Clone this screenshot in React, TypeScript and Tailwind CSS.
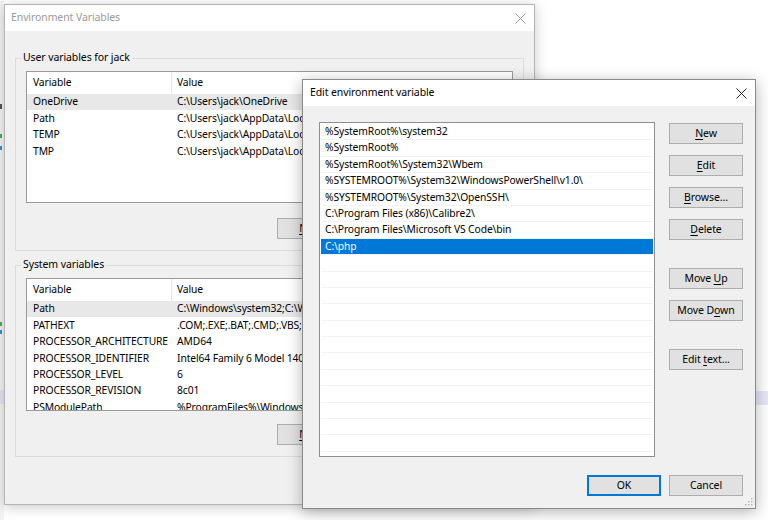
import React from "react";

const FONT = "font-['Noto_Sans','Open_Sans',sans-serif] tracking-[-0.1px]";

interface Row {
  name: string;
  value: string;
}

const userVars: Row[] = [
  { name: "OneDrive", value: "C:\\Users\\jack\\OneDrive" },
  { name: "Path", value: "C:\\Users\\jack\\AppData\\Local\\Microsoft\\WindowsApps;" },
  { name: "TEMP", value: "C:\\Users\\jack\\AppData\\Local\\Temp" },
  { name: "TMP", value: "C:\\Users\\jack\\AppData\\Local\\Temp" },
];

const systemVars: Row[] = [
  { name: "Path", value: "C:\\Windows\\system32;C:\\Windows;C:\\Windows\\System32\\Wbem;" },
  { name: "PATHEXT", value: ".COM;.EXE;.BAT;.CMD;.VBS;.VBE;.JS;.JSE;.WSF;.WSH;.MSC" },
  { name: "PROCESSOR_ARCHITECTURE", value: "AMD64" },
  { name: "PROCESSOR_IDENTIFIER", value: "Intel64 Family 6 Model 140 Stepping 1, GenuineIntel" },
  { name: "PROCESSOR_LEVEL", value: "6" },
  { name: "PROCESSOR_REVISION", value: "8c01" },
  { name: "PSModulePath", value: "%ProgramFiles%\\WindowsPowerShell\\Modules;" },
];

const paths = [
  "%SystemRoot%\\system32",
  "%SystemRoot%",
  "%SystemRoot%\\System32\\Wbem",
  "%SYSTEMROOT%\\System32\\WindowsPowerShell\\v1.0\\",
  "%SYSTEMROOT%\\System32\\OpenSSH\\",
  "C:\\Program Files (x86)\\Calibre2\\",
  "C:\\Program Files\\Microsoft VS Code\\bin",
  "C:\\php",
];

function CloseX({ color }: { color: string }) {
  return (
    <svg width="11" height="11" viewBox="0 0 11 11">
      <path d="M0.5 0.5 L10.5 10.5 M10.5 0.5 L0.5 10.5" stroke={color} strokeWidth="1" />
    </svg>
  );
}

// label with an underlined access key
function Key({ before = "", k, after = "" }: { before?: string; k: string; after?: string }) {
  return (
    <span>
      {before}
      <span className="underline underline-offset-2">{k}</span>
      {after}
    </span>
  );
}

function WinButton({
  children,
  primary = false,
}: {
  children: React.ReactNode;
  primary?: boolean;
}) {
  return (
    <div
      className={`flex h-[21px] w-[74px] shrink-0 items-center justify-center bg-[#e1e1e1] text-[10.5px] text-black ${
        primary ? "border-2 border-[#0078d7]" : "border border-[#adadad]"
      }`}
    >
      {children}
    </div>
  );
}

function VarList({ rows, height }: { rows: Row[]; height: string }) {
  return (
    <div className={`${height} overflow-hidden border border-[#9a9a9a] bg-white`}>
      <div className="flex h-[22px] items-center text-[10.3px] text-black">
        <div className="flex h-full w-[145px] items-center border-r border-[#e5e5e5] pl-[6px]">
          Variable
        </div>
        <div className="pl-[5px]">Value</div>
      </div>
      {rows.map((r, i) => (
        <div
          key={r.name}
          className={`flex h-[16.4px] items-center whitespace-nowrap text-[10.3px] text-black ${
            i === 0 ? "bg-[#e8e8e8]" : ""
          }`}
        >
          <div className="w-[145px] shrink-0 overflow-hidden pl-[6px]">{r.name}</div>
          <div className="pl-[5px]">{r.value}</div>
        </div>
      ))}
    </div>
  );
}

function GroupBox({
  label,
  children,
}: {
  label: string;
  children: React.ReactNode;
}) {
  return (
    <div className="relative border border-[#dcdcdc] px-[10px] pt-[12px] pb-[11px]">
      <span className="absolute -top-[9px] left-[5px] bg-[#f0f0f0] px-[2px] text-[10.5px] text-black">
        {label}
      </span>
      {children}
    </div>
  );
}

function EnvironmentDialog() {
  return (
    <div className="absolute left-[4px] top-[4px] flex h-[501px] w-[531px] flex-col border border-[#b4b4b4] bg-[#f0f0f0] shadow-[0_2px_12px_rgba(0,0,0,0.22)]">
      <div className="flex h-[26px] shrink-0 items-center justify-between bg-white pl-[6px] pr-[8px]">
        <span className="text-[10.5px] text-[#9a9a9a]">Environment Variables</span>
        <CloseX color="#a0a0a0" />
      </div>
      <div className="flex flex-col gap-[14px] px-[10px] pt-[27px]">
        <GroupBox label="User variables for jack">
          <VarList rows={userVars} height="h-[132px]" />
          <div className="mt-[15px] flex justify-end gap-[7px]">
            <WinButton>
              <Key k="N" after="ew..." />
            </WinButton>
            <WinButton>
              <Key k="E" after="dit..." />
            </WinButton>
            <WinButton>
              <Key k="D" after="elete" />
            </WinButton>
          </div>
        </GroupBox>
        <GroupBox label="System variables">
          <VarList rows={systemVars} height="h-[133px]" />
          <div className="mt-[13px] flex justify-end gap-[7px]">
            <WinButton>
              <Key k="N" after="ew..." />
            </WinButton>
            <WinButton>
              <Key before="E" k="d" after="it..." />
            </WinButton>
            <WinButton>
              <Key before="De" k="l" after="ete" />
            </WinButton>
          </div>
        </GroupBox>
        <div className="flex justify-end gap-[8px] pr-[2px]">
          <WinButton primary>OK</WinButton>
          <WinButton>Cancel</WinButton>
        </div>
      </div>
    </div>
  );
}

function EditDialog() {
  const rows = Array.from({ length: 21 }, (_, i) => paths[i] ?? "");
  return (
    <div className="absolute left-[302px] top-[79px] flex h-[430px] w-[454px] flex-col border border-[#8a8a8a] bg-[#f0f0f0] shadow-[0_3px_14px_rgba(0,0,0,0.3)]">
      <div className="flex h-[26px] shrink-0 items-center justify-between bg-white pl-[7px] pr-[8px]">
        <span className="text-[10.5px] text-black">Edit environment variable</span>
        <CloseX color="#222222" />
      </div>
      <div className="flex gap-[14px] pl-[16px] pt-[16px]">
        <div className="h-[335px] w-[336px] overflow-hidden border border-[#8f8f8f] bg-white p-[1px]">
          {rows.map((p, i) => (
            <div
              key={i}
              className={`flex h-[16.4px] items-center border-b border-[#f2f2f2] pl-[4px] text-[10.3px] whitespace-nowrap ${
                i === 7 ? "bg-[#0078d7] text-white" : "text-black"
              }`}
            >
              {p}
            </div>
          ))}
        </div>
        <div className="flex flex-col pt-[1px]">
          <div className="flex flex-col gap-[11px]">
            <WinButton>
              <Key k="N" after="ew" />
            </WinButton>
            <WinButton>
              <Key k="E" after="dit" />
            </WinButton>
            <WinButton>
              <Key k="B" after="rowse..." />
            </WinButton>
            <WinButton>
              <Key k="D" after="elete" />
            </WinButton>
          </div>
          <div className="mt-[28px] flex flex-col gap-[11px]">
            <WinButton>
              <Key before="Move " k="U" after="p" />
            </WinButton>
            <WinButton>
              <Key before="Move D" k="o" after="wn" />
            </WinButton>
          </div>
          <div className="mt-[28px]">
            <WinButton>
              <Key before="Edit " k="t" after="ext..." />
            </WinButton>
          </div>
        </div>
      </div>
      <div className="mt-[18px] flex justify-end gap-[8px] pr-[12px]">
        <WinButton primary>OK</WinButton>
        <WinButton>Cancel</WinButton>
      </div>
      <div className="flex flex-1 items-end justify-end pb-[2px] pr-[2px]">
        <svg width="8" height="8" viewBox="0 0 8 8">
          <rect x="6" y="0" width="1.4" height="1.4" fill="#b0b0b0" />
          <rect x="3" y="3" width="1.4" height="1.4" fill="#b0b0b0" />
          <rect x="6" y="3" width="1.4" height="1.4" fill="#b0b0b0" />
          <rect x="0" y="6" width="1.4" height="1.4" fill="#b0b0b0" />
          <rect x="3" y="6" width="1.4" height="1.4" fill="#b0b0b0" />
          <rect x="6" y="6" width="1.4" height="1.4" fill="#b0b0b0" />
        </svg>
      </div>
    </div>
  );
}

export default function App() {
  return (
    <div className={`relative h-[520px] w-[768px] overflow-hidden bg-white ${FONT}`}>
      {/* bits of the window behind, at the left edge */}
      <div className="absolute left-0 top-0 h-[520px] w-[4px] bg-[#f3f3f3]" />
      <div className="absolute left-0 top-[104px] h-[5px] w-[2px] bg-[#555]" />
      <div className="absolute left-0 top-[134px] h-[4px] w-[2px] bg-[#4caf50]" />
      <div className="absolute left-0 top-[146px] h-[4px] w-[2px] bg-[#3b8fd0]" />
      <div className="absolute left-0 top-[322px] h-[4px] w-[2px] bg-[#4caf50]" />
      <div className="absolute left-0 top-[330px] h-[4px] w-[2px] bg-[#3b8fd0]" />
      <div className="absolute left-0 top-[390px] h-[14px] w-[5px] bg-[#e4e4f4]" />
      <div className="absolute right-0 top-[391px] h-[14px] w-[12px] bg-[#e6e6f6]" />
      <EnvironmentDialog />
      <EditDialog />
    </div>
  );
}
